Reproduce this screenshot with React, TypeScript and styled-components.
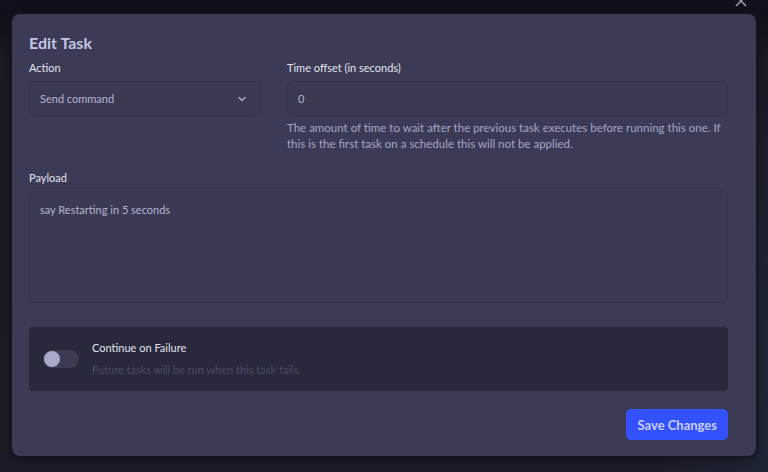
import styled, { createGlobalStyle } from 'styled-components';
import { ChevronDown, X } from 'lucide-react';

//#region styled component
const GlobalStyle = createGlobalStyle`
  html, body {
    margin: 0;
    padding: 0;
    height: 100%;
    background: #14151f;
  }
  body {
    font-family: Lato, 'Noto Sans', sans-serif;
    -webkit-font-smoothing: antialiased;
  }
  * { box-sizing: border-box; }
`;

const Backdrop = styled.div`
  width: 768px;
  height: 472px;
  overflow: hidden;
  background:
    radial-gradient(ellipse 120px 300px at 100% 80%, rgba(40, 60, 90, 0.35), transparent),
    linear-gradient(#10111a 0, #10111a 14px, #1b1b27 60px, #1d1d29);
  padding: 14px 12px 16px 12px;
`;

const Modal = styled.section`
  position: relative;
  height: 442px;
  background: #3b3b55;
  border-radius: 8px;
  box-shadow: 0 0 0 3px rgba(20, 20, 32, 0.55), 0 4px 14px rgba(0, 0, 0, 0.4);
  padding: 17px 28px 16px 17px;
  display: flex;
  flex-direction: column;
`;

const CloseButton = styled.button`
  position: absolute;
  top: -22px;
  right: 6px;
  background: none;
  border: 0;
  padding: 0;
  color: #9a9ab0;
  display: flex;
`;

const Title = styled.h2`
  margin: 0 0 4px 0;
  font-size: 16px;
  line-height: 24px;
  font-weight: 700;
  color: #c4c4e4;
`;

const Row = styled.div`
  display: grid;
  grid-template-columns: 232px 1fr;
  column-gap: 26px;
`;

const Field = styled.div<{ $top?: number }>`
  display: flex;
  flex-direction: column;
  margin-top: ${({ $top }) => $top ?? 0}px;
`;

const Label = styled.label`
  font-size: 11px;
  line-height: 18px;
  color: #e2e2f0;
  margin-bottom: 4px;
`;

const boxBase = `
  background: #3a3a53;
  border: 1px solid #34344c;
  border-radius: 6px;
  color: #b4b4d0;
  font-family: Lato, 'Noto Sans', sans-serif;
  font-size: 11px;
  outline: none;
`;

const Select = styled.div`
  ${boxBase}
  height: 35px;
  display: flex;
  align-items: center;
  justify-content: space-between;
  padding: 0 12px 0 10px;
`;

const Input = styled.input`
  ${boxBase}
  height: 35px;
  padding: 0 10px;
`;

const Help = styled.p`
  margin: 4px 0 0 0;
  font-size: 11.5px;
  line-height: 16px;
  color: #a6a6c6;
`;

const TextArea = styled.textarea`
  ${boxBase}
  height: 112px;
  resize: none;
  padding: 9px 10px;
  line-height: 18px;
`;

const FailureBox = styled.div`
  margin-top: 24px;
  height: 64px;
  background: #29293c;
  border-radius: 4px;
  display: flex;
  align-items: center;
  padding: 0 14px;
  gap: 13px;
`;

const Track = styled.span<{ $on: boolean }>`
  width: 36px;
  height: 18px;
  border-radius: 9px;
  background: ${({ $on }) => ($on ? '#3351ff' : '#3b3b54')};
  display: flex;
  align-items: center;
  justify-content: ${({ $on }) => ($on ? 'flex-end' : 'flex-start')};
  padding: 0 1px;
  flex-shrink: 0;
`;

const Knob = styled.span`
  width: 16px;
  height: 16px;
  border-radius: 50%;
  background: #a9a9c9;
`;

const ToggleText = styled.div`
  display: flex;
  flex-direction: column;
  gap: 6px;
`;

const ToggleTitle = styled.span`
  font-size: 11px;
  line-height: 16px;
  color: #e2e2f0;
`;

const ToggleHint = styled.span`
  font-size: 11px;
  line-height: 16px;
  color: #4b4b68;
`;

const Footer = styled.div`
  margin-top: 18px;
  display: flex;
  justify-content: flex-end;
`;

const SaveButton = styled.button`
  height: 31px;
  padding: 0 11px;
  border: 0;
  border-radius: 5px;
  background: #3351ff;
  color: #c9cdff;
  font-family: Lato, 'Noto Sans', sans-serif;
  font-size: 13px;
  font-weight: 700;
`;
//#endregion

function App() {
  return (
    <>
      <GlobalStyle />
      <Backdrop>
        <Modal>
          <CloseButton aria-label="close">
            <X size={18} strokeWidth={2} />
          </CloseButton>

          <Title>Edit Task</Title>

          <Row>
            <Field>
              <Label>Action</Label>
              <Select>
                <span>Send command</span>
                <ChevronDown size={12} strokeWidth={2.5} />
              </Select>
            </Field>
            <Field>
              <Label>Time offset (in seconds)</Label>
              <Input defaultValue="0" />
              <Help>
                The amount of time to wait after the previous task executes before running this one. If
                this is the first task on a schedule this will not be applied.
              </Help>
            </Field>
          </Row>

          <Field $top={17}>
            <Label>Payload</Label>
            <TextArea defaultValue="say Restarting in 5 seconds" />
          </Field>

          <FailureBox>
            <Track $on={false}>
              <Knob />
            </Track>
            <ToggleText>
              <ToggleTitle>Continue on Failure</ToggleTitle>
              <ToggleHint>Future tasks will be run when this task fails.</ToggleHint>
            </ToggleText>
          </FailureBox>

          <Footer>
            <SaveButton>Save Changes</SaveButton>
          </Footer>
        </Modal>
      </Backdrop>
    </>
  );
}

export default App;
